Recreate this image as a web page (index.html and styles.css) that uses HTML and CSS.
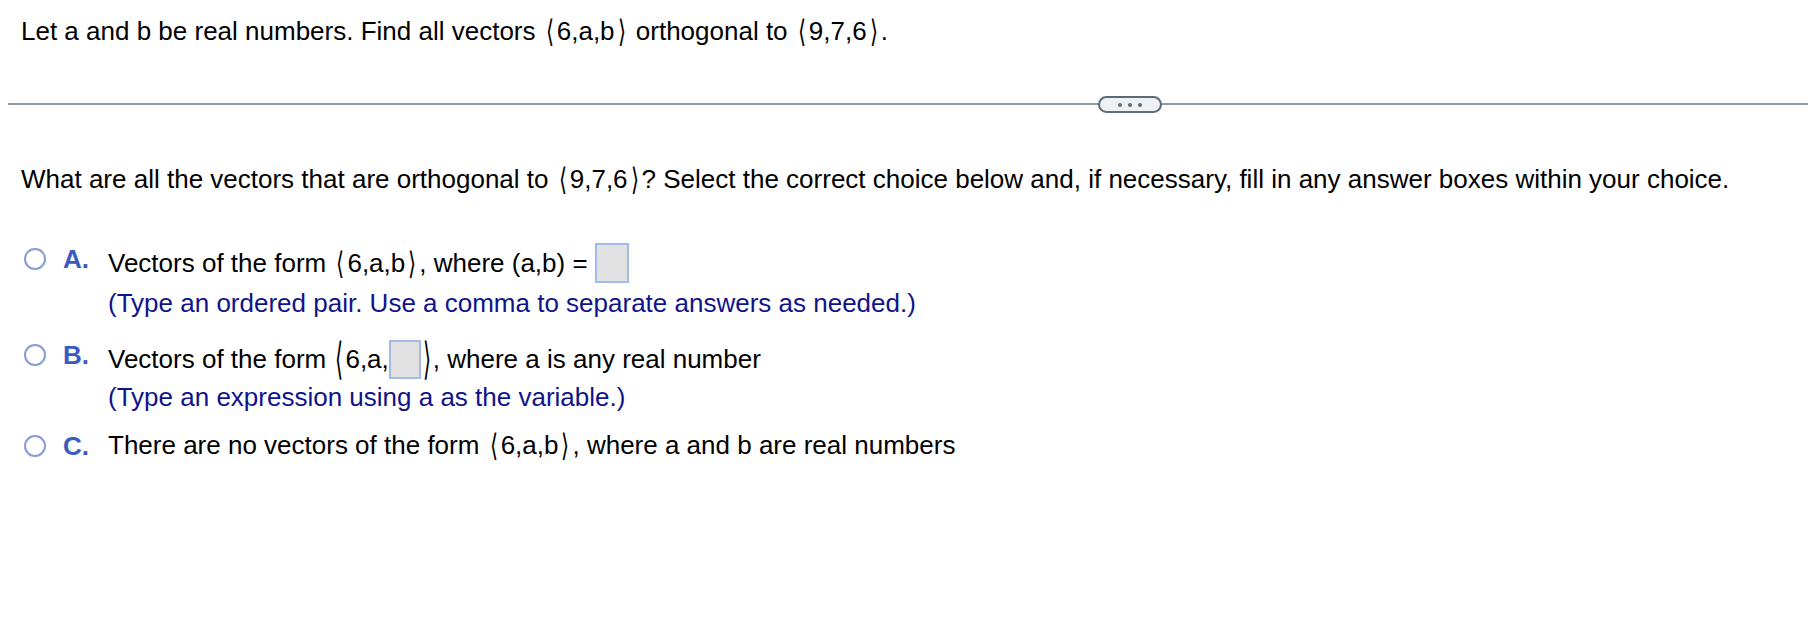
FILE: index.html
```html
<!DOCTYPE html>
<html lang="en">
<head>
<meta charset="UTF-8">
<meta name="viewport" content="width=device-width, initial-scale=1.0">
<title>Orthogonal Vectors</title>
<link rel="stylesheet" href="styles.css">
</head>
<body>
<div class="page">
    <p class="prompt">Let a and b be real numbers. Find all vectors <span class="vec"><span class="ang">&#10216;</span>6,a,b<span class="ang">&#10217;</span></span> orthogonal to <span class="vec"><span class="ang">&#10216;</span>9,7,6<span class="ang">&#10217;</span></span>.</p>

    <div class="divider">
        <div class="pill"><span></span><span></span><span></span></div>
    </div>

    <p class="question">What are all the vectors that are orthogonal to <span class="vec"><span class="ang">&#10216;</span>9,7,6<span class="ang">&#10217;</span></span>? Select the correct choice below and, if necessary, fill in any answer boxes within your choice.</p>

    <div class="choices">
        <div class="choice">
            <span class="radio"></span>
            <span class="letter">A.</span>
            <div class="body">
                <div class="main">Vectors of the form&nbsp;<span class="vec"><span class="ang">&#10216;</span>6,a,b<span class="ang">&#10217;</span></span>, where (a,b)&nbsp;=&nbsp;<span class="box box-a"></span></div>
                <div class="hint">(Type an ordered pair. Use a comma to separate answers as needed.)</div>
            </div>
        </div>
        <div class="choice choice-b">
            <span class="radio"></span>
            <span class="letter">B.</span>
            <div class="body">
                <div class="main">Vectors of the form&nbsp;<span class="tall">&#10216;</span>6,a,<span class="box box-b"></span><span class="tall">&#10217;</span>, where a is any real number</div>
                <div class="hint">(Type an expression using a as the variable.)</div>
            </div>
        </div>
        <div class="choice choice-c">
            <span class="radio"></span>
            <span class="letter">C.</span>
            <div class="body">
                <div class="main">There are no vectors of the form&nbsp;<span class="vec"><span class="ang">&#10216;</span>6,a,b<span class="ang">&#10217;</span></span>, where a and b are real numbers</div>
            </div>
        </div>
    </div>
</div>
</body>
</html>
```

FILE: styles.css
```css
/* Basic styling */
body {
    margin: 0;
    font-family: "Liberation Sans", Arial, sans-serif;
    font-size: 26px;
    color: #000;
    background: #fff;
}
.page {
    padding-top: 16px;
}
.prompt,
.question {
    margin: 0;
    padding-left: 21px;
    line-height: 30px;
}
.vec {
    white-space: nowrap;
}
.ang {
    font-family: "DejaVu Sans", sans-serif;
    font-weight: 200;
    display: inline-block;
    transform: scale(0.8, 1.2);
    margin: 0 2px;
}

/* divider with the pill in the middle */
.divider {
    margin: 50px 0 0 8px;
    height: 17px;
    display: flex;
    align-items: center;
    justify-content: center;
    position: relative;
}
.divider::before {
    content: "";
    position: absolute;
    left: 0;
    right: 0;
    top: 7px;
    height: 2px;
    background: #8d99a6;
}
.pill {
    position: relative; /* sits over the line */
    box-sizing: border-box;
    width: 64px;
    height: 17px;
    margin-left: 444px;
    border: 2px solid #5f6b77;
    border-radius: 9px;
    background: #eef2f5;
    display: flex;
    align-items: center;
    justify-content: center;
    gap: 6px;
}
.pill span {
    width: 4px;
    height: 4px;
    border-radius: 50%;
    background: #5f6b77;
}

.question {
    margin-top: 51px;
}

/* answer choices */
.choices {
    margin-top: 49px;
}
.choice {
    display: flex;
    align-items: flex-start;
}
.choice-b {
    margin-top: 21px;
}
.choice-c {
    margin-top: 18px;
    align-items: center;
}
.radio {
    box-sizing: border-box;
    width: 22px;
    height: 22px;
    margin: 5px 0 0 24px;
    border: 2px solid #8c9cd6;
    border-radius: 50%;
    box-shadow: 0 0 1px #c0cbee;
    flex-shrink: 0;
}
.letter {
    width: 45px;
    margin-left: 17px;
    line-height: 32px;
    font-weight: bold;
    color: #3a5bc0;
}
.choice-c .radio {
    margin-top: 0;
}
.choice-c .letter {
    line-height: 30px;
}
.body {
    display: flex;
    flex-direction: column;
}
.main {
    display: flex;
    align-items: center;
    min-height: 40px;
    white-space: pre;
}
.choice-c .main {
    min-height: 30px;
}
.hint {
    margin-top: 5px;
    line-height: 30px;
    color: #10148a;
}
.choice-b .hint {
    margin-top: 3px;
}
.box {
    display: inline-block;
    box-sizing: border-box;
    border: 2px solid #a3b9ea;
    background: #e1e1e1;
}
.box-a {
    width: 34px;
    height: 40px;
}
.box-b {
    width: 32px;
    height: 39px;
}
.tall {
    font-family: "DejaVu Sans", sans-serif;
    font-weight: 200;
    display: inline-block;
    transform: scale(0.8, 1.7);
    margin: 0 1px;
}
```
